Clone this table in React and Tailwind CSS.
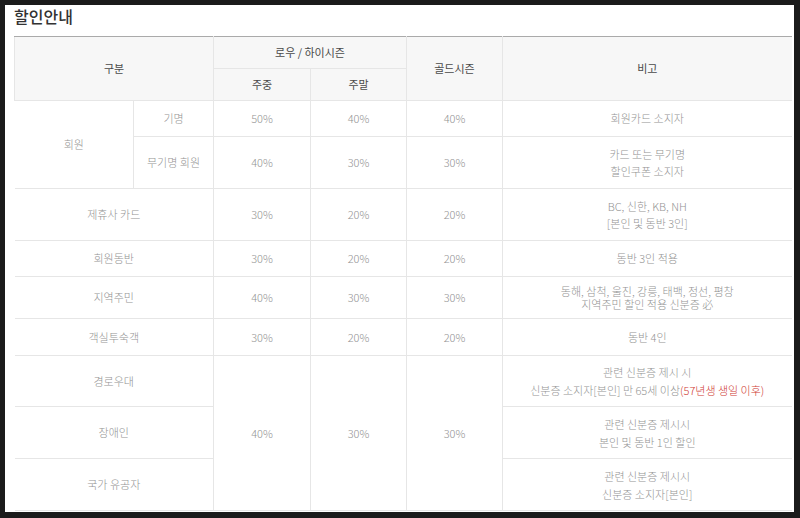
const font = { fontFamily: '"Noto Sans CJK KR", "Noto Sans", sans-serif' }

const td = "border border-[#e6e6e6] text-center align-middle text-[11px] text-[#939393] font-light"
const th = "border border-[#e6e6e6] bg-[#f7f7f7] text-center align-middle text-[11px] text-[#4a4a4a] font-normal"

export default function App() {
  return (
    <div className="w-[800px] h-[518px] bg-[#1b1b1b] pt-[5px] pl-[5px]" style={font}>
      <div className="w-[789px] h-[507px] bg-white pl-[9px] overflow-hidden">
        <h2 className="h-[31px] text-[16px] font-medium leading-[22px] text-[#333]">할인안내</h2>
        <table className="w-[777px] table-fixed border-collapse border-t border-t-[#aaaaaa]">
          <colgroup>
            <col className="w-[119px]" />
            <col className="w-[80px]" />
            <col className="w-[97px]" />
            <col className="w-[96px]" />
            <col className="w-[96px]" />
            <col className="w-[289px]" />
          </colgroup>
          <thead>
            <tr className="h-[32px]">
              <th rowSpan={2} colSpan={2} className={th + " border-t-[#aaaaaa]"}>구분</th>
              <th colSpan={2} className={th + " border-t-[#aaaaaa]"}>로우 / 하이시즌</th>
              <th rowSpan={2} className={th + " border-t-[#aaaaaa]"}>골드시즌</th>
              <th rowSpan={2} className={th + " border-t-[#aaaaaa] border-r-0"}>비고</th>
            </tr>
            <tr className="h-[32px]">
              <th className={th}>주중</th>
              <th className={th}>주말</th>
            </tr>
          </thead>
          <tbody>
            <tr className="h-[36px]">
              <td rowSpan={2} className={td + " border-l-0"}>회원</td>
              <td className={td}>기명</td>
              <td className={td}>50%</td>
              <td className={td}>40%</td>
              <td className={td}>40%</td>
              <td className={td + " border-r-0"}>회원카드 소지자</td>
            </tr>
            <tr className="h-[52px]">
              <td className={td}>무기명 회원</td>
              <td className={td}>40%</td>
              <td className={td}>30%</td>
              <td className={td}>30%</td>
              <td className={td + " border-r-0 leading-[17px]"}>카드 또는 무기명<br />할인쿠폰 소지자</td>
            </tr>
            <tr className="h-[52px]">
              <td colSpan={2} className={td + " border-l-0"}>제휴사 카드</td>
              <td className={td}>30%</td>
              <td className={td}>20%</td>
              <td className={td}>20%</td>
              <td className={td + " border-r-0 leading-[17px]"}>BC, 신한, KB, NH<br />[본인 및 동반 3인]</td>
            </tr>
            <tr className="h-[36px]">
              <td colSpan={2} className={td + " border-l-0"}>회원동반</td>
              <td className={td}>30%</td>
              <td className={td}>20%</td>
              <td className={td}>20%</td>
              <td className={td + " border-r-0"}>동반 3인 적용</td>
            </tr>
            <tr className="h-[42px]">
              <td colSpan={2} className={td + " border-l-0"}>지역주민</td>
              <td className={td}>40%</td>
              <td className={td}>30%</td>
              <td className={td}>30%</td>
              <td className={td + " border-r-0 leading-[13px]"}>동해, 삼척, 울진, 강릉, 태백, 정선, 평창<br />지역주민 할인 적용 신분증 必</td>
            </tr>
            <tr className="h-[37px]">
              <td colSpan={2} className={td + " border-l-0"}>객실투숙객</td>
              <td className={td}>30%</td>
              <td className={td}>20%</td>
              <td className={td}>20%</td>
              <td className={td + " border-r-0"}>동반 4인</td>
            </tr>
            <tr className="h-[51px]">
              <td colSpan={2} className={td + " border-l-0"}>경로우대</td>
              <td rowSpan={3} className={td}>40%</td>
              <td rowSpan={3} className={td}>30%</td>
              <td rowSpan={3} className={td}>30%</td>
              <td className={td + " border-r-0 leading-[18px]"}>
                관련 신분증 제시 시<br />
                신분증 소지자[본인] 만 65세 이상<span className="text-[#cf3a33]">(57년생 생일 이후)</span>
              </td>
            </tr>
            <tr className="h-[52px]">
              <td colSpan={2} className={td + " border-l-0"}>장애인</td>
              <td className={td + " border-r-0 leading-[18px]"}>관련 신분증 제시시<br />본인 및 동반 1인 할인</td>
            </tr>
            <tr className="h-[52px]">
              <td colSpan={2} className={td + " border-l-0"}>국가 유공자</td>
              <td className={td + " border-r-0 leading-[18px]"}>관련 신분증 제시시<br />신분증 소지자[본인]</td>
            </tr>
          </tbody>
        </table>
      </div>
    </div>
  )
}
